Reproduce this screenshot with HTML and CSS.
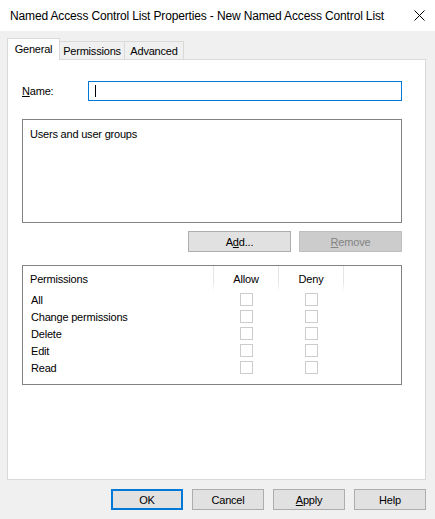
FILE: index.html
```html
<!DOCTYPE html>
<html>
<head>
<meta charset="utf-8">
<link rel="stylesheet" href="styles.css">
</head>
<body>
<div class="window">
  <div class="titlebar">
    <span class="title">Named Access Control List Properties - New Named Access Control List</span>
    <svg class="close" width="11" height="11" viewBox="0 0 11 11"><path d="M0.5 0.5 L10.5 10.5 M10.5 0.5 L0.5 10.5" stroke="#000" stroke-width="1" fill="none"/></svg>
  </div>
  <div class="body">
    <div class="tabs">
      <div class="tab active">General</div>
      <div class="tab perm-tab">Permissions</div>
      <div class="tab adv-tab">Advanced</div>
    </div>
    <div class="panel">
      <div class="name-row">
        <label class="name-label"><u>N</u>ame:</label>
        <div class="input"><span class="caret"></span></div>
      </div>
      <div class="listbox">Users and user groups</div>
      <div class="list-buttons">
        <button class="btn">A<u>d</u>d...</button>
        <button class="btn disabled"><u>R</u>emove</button>
      </div>
      <div class="perms">
        <div class="perm-head">
          <div class="ph name">Permissions</div>
          <div class="ph col">Allow</div>
          <div class="ph col">Deny</div>
          <div class="ph rest"></div>
        </div>
        <div class="perm-row"><div class="pname">All</div><div class="pcell"><span class="cb"></span></div><div class="pcell"><span class="cb"></span></div></div>
        <div class="perm-row"><div class="pname">Change permissions</div><div class="pcell"><span class="cb"></span></div><div class="pcell"><span class="cb"></span></div></div>
        <div class="perm-row"><div class="pname">Delete</div><div class="pcell"><span class="cb"></span></div><div class="pcell"><span class="cb"></span></div></div>
        <div class="perm-row"><div class="pname">Edit</div><div class="pcell"><span class="cb"></span></div><div class="pcell"><span class="cb"></span></div></div>
        <div class="perm-row"><div class="pname">Read</div><div class="pcell"><span class="cb"></span></div><div class="pcell"><span class="cb"></span></div></div>
      </div>
    </div>
    <div class="footer">
      <button class="btn fbtn default">OK</button>
      <button class="btn fbtn">Cancel</button>
      <button class="btn fbtn"><u>A</u>pply</button>
      <button class="btn fbtn">Help</button>
    </div>
  </div>
</div>
</body>
</html>
```

FILE: styles.css
```css
* { box-sizing: border-box; }
html, body { margin: 0; padding: 0; }
body {
  width: 435px;
  height: 519px;
  overflow: hidden;
  background: #f0f0f0;
  font-family: "Liberation Sans", Arial, sans-serif;
  font-size: 11px;
  letter-spacing: -0.2px;
  color: #000;
}
.window { width: 435px; height: 519px; display: flex; flex-direction: column; }
.titlebar {
  height: 31px;
  background: #fff;
  display: flex;
  align-items: center;
  padding-left: 10px;
  padding-right: 10px;
  justify-content: space-between;
}
.title { font-size: 12px; letter-spacing: -0.15px; }
.close { display: block; }
.body { flex: 1; padding: 7px 9px 0 7px; display: flex; flex-direction: column; }
.tabs { display: flex; align-items: flex-end; height: 21px; position: relative; z-index: 1; }
.tab {
  height: 18px;
  border: 1px solid #d9d9d9;
  border-bottom: none;
  background: #f0f0f0;
  padding: 0;
  display: flex;
  align-items: center;
  justify-content: center;
  margin-left: -1px;
  white-space: nowrap;
}
.tab.active {
  height: 22px;
  background: #fff;
  padding: 0 0 2px 0;
  margin-left: 0;
  margin-bottom: -1px;
  width: 53px;
}
.perm-tab { width: 66px; }
.adv-tab { width: 60px; }
.panel {
  height: 421px;
  background: #fff;
  border: 1px solid #d9d9d9;
  padding: 21px 23px 0 14px;
  display: flex;
  flex-direction: column;
}
.name-row { display: flex; align-items: center; height: 20px; }
.name-label { width: 66px; }
.input {
  flex: 1;
  height: 20px;
  border: 1px solid #0078d7;
  background: #fff;
  position: relative;
}
.caret {
  position: absolute;
  left: 6px;
  top: 3px;
  width: 1px;
  height: 12px;
  background: #000;
}
.listbox {
  margin-top: 18px;
  height: 104px;
  border: 1px solid #828282;
  padding: 8px 7px;
}
.list-buttons { display: flex; justify-content: flex-end; gap: 8px; margin-top: 8px; }
.btn {
  font-family: "Liberation Sans", Arial, sans-serif;
  font-size: 11px;
  letter-spacing: -0.2px;
  color: #000;
  background: #e1e1e1;
  border: 1px solid #adadad;
  height: 21px;
  width: 103px;
  padding: 0;
  margin: 0;
  border-radius: 0;
}
.btn.disabled { background: #cccccc; border-color: #bfbfbf; color: #838383; }
.perms {
  margin-top: 13px;
  height: 120px;
  border: 1px solid #828282;
}
.perm-head { display: flex; height: 25px; }
.ph { display: flex; align-items: center; padding-top: 1px; }
.ph.name { width: 190px; padding-left: 7px; }
.ph.col {
  width: 65px;
  justify-content: center;
  border-left: 1px solid transparent;
  border-image: linear-gradient(to bottom, #e5e5e5, #e5e5e5 60%, #ffffff) 1;
}
.ph.rest {
  width: 10px;
  border-left: 1px solid transparent;
  border-image: linear-gradient(to bottom, #e5e5e5, #e5e5e5 60%, #ffffff) 1;
}
.perm-row { display: flex; height: 17px; align-items: center; }
.pname { width: 190px; padding-left: 8px; }
.pcell { width: 65px; display: flex; justify-content: center; padding-left: 2px; }
.cb {
  display: block;
  width: 13px;
  height: 13px;
  border: 1px solid #cccccc;
  background: #fff;
}
.footer {
  display: flex;
  justify-content: flex-end;
  gap: 9px;
  margin-top: 9px;
}
.fbtn { width: 72px; }
.btn.default { border: 2px solid #0078d7; }
u { text-decoration: underline; text-underline-offset: 1px; }
```
